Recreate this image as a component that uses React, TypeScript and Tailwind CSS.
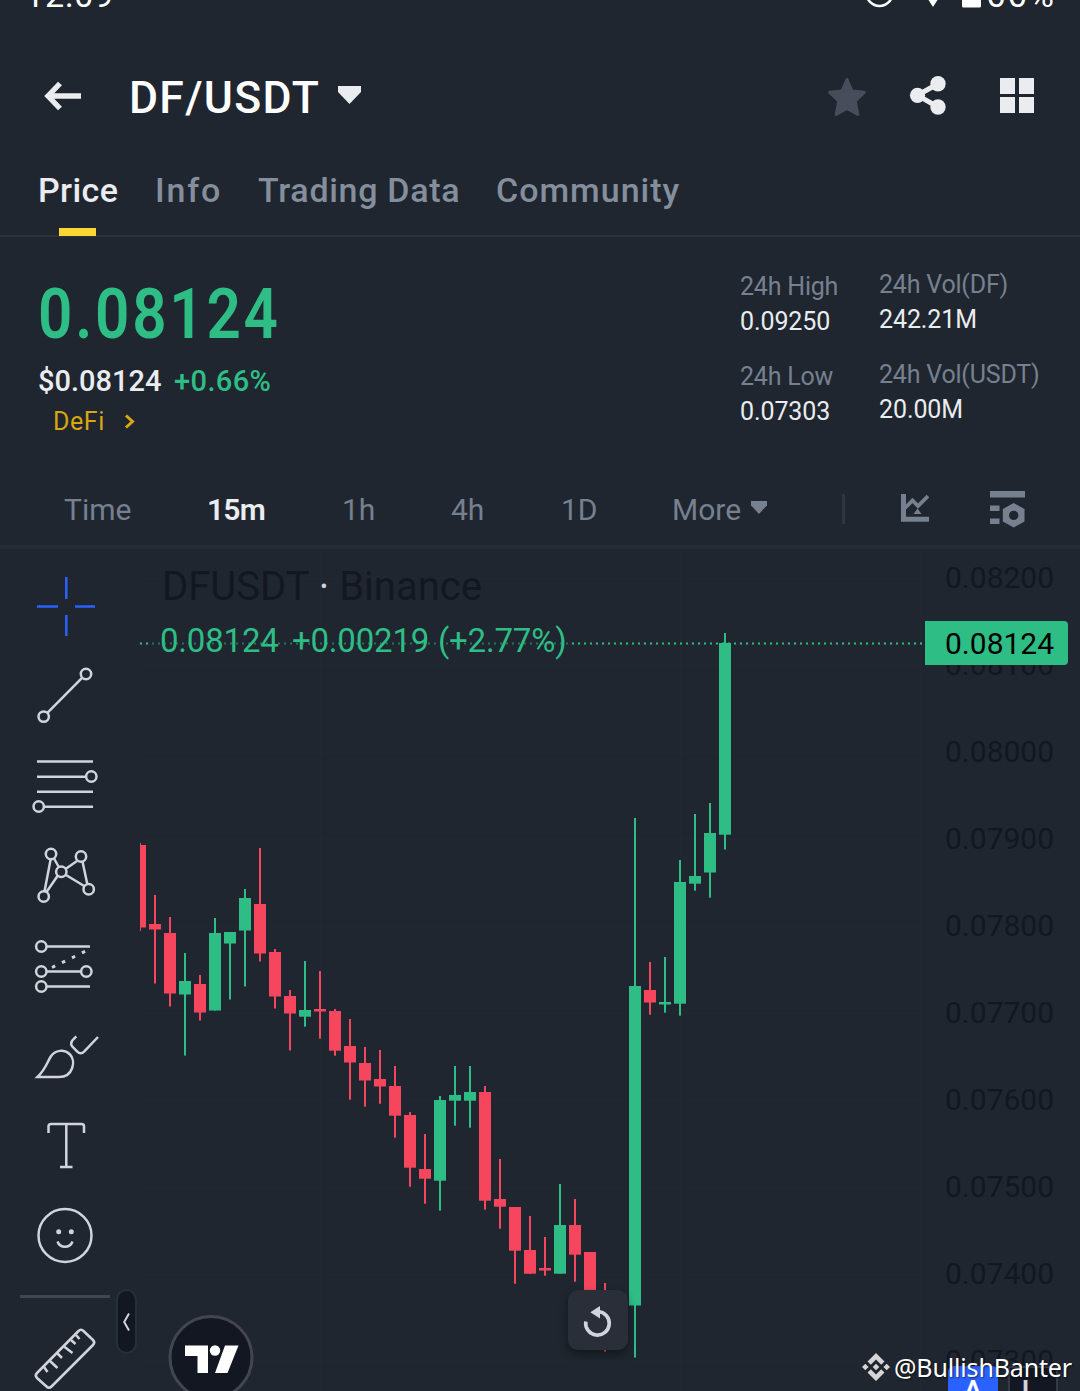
import React from 'react';

const UP = '#2ebd85';
const DOWN = '#f6465d';

// [x, body top, body bottom, wick top, wick bottom, rising]
type Candle = [number, number, number, number, number, boolean];

const CANDLES: Candle[] = [
    [140, 845, 927.5, 843, 931, false],
    [155, 924, 929.5, 895, 983.5, false],
    [170, 933, 993.5, 917, 1006.5, false],
    [185, 981, 994.5, 953, 1055.5, true],
    [200, 984, 1012.5, 975, 1020.5, false],
    [215, 933, 1010.5, 918, 1010.5, true],
    [230, 932, 943.5, 932, 999.5, true],
    [245, 898, 930.5, 889, 986.5, true],
    [260, 904, 953.5, 848, 961.5, false],
    [275, 952, 996.5, 949, 1008.5, false],
    [290, 996, 1013.5, 990, 1050.5, false],
    [305, 1010, 1016.7, 961, 1026.7, true],
    [320, 1009, 1011.5, 971, 1038.7, false],
    [335, 1011, 1050.7, 1009, 1055.7, false],
    [350, 1046, 1062.5, 1019, 1099.7, false],
    [365, 1063, 1080.5, 1047, 1106.7, false],
    [380, 1079, 1086.5, 1050, 1103.7, false],
    [395, 1086, 1115.7, 1066, 1137.7, false],
    [410, 1115, 1167.7, 1112, 1186.7, false],
    [425, 1169, 1178.7, 1134, 1203.7, false],
    [440, 1100, 1180.7, 1096, 1210.7, true],
    [455, 1095, 1100.7, 1066, 1125.7, true],
    [470, 1092, 1100.7, 1066, 1127.7, true],
    [485, 1092, 1200.7, 1086, 1209.7, false],
    [500, 1199, 1206.7, 1159, 1228.7, false],
    [515, 1207, 1250.7, 1207, 1283.7, false],
    [530, 1250, 1273.7, 1216, 1273.7, false],
    [545, 1268, 1270.5, 1237, 1275.7, false],
    [560, 1225, 1273.7, 1184, 1273.7, true],
    [575, 1225, 1254.7, 1199, 1281.7, false],
    [590, 1252, 1296, 1252, 1300, false],
    [605, 1296, 1330, 1283, 1351.7, false],
    [635, 986, 1305.5, 818, 1357.5, true],
    [650, 990, 1002.5, 962, 1014.7, false],
    [665, 1002, 1004.5, 957, 1012.7, true],
    [680, 882, 1003.7, 860, 1015.7, true],
    [695, 876, 883.7, 814, 890.7, true],
    [710, 833, 872.5, 803, 897.7, true],
    [725, 643, 834.7, 633, 849.5, true],
];

const AXIS_LABELS = ['0.08200', '0.08100', '0.08000', '0.07900', '0.07800', '0.07700', '0.07600', '0.07500', '0.07400', '0.07300'];

const Caret: React.FC<{ className: string }> = ({ className }) => (
    <svg viewBox="0 0 23 18" preserveAspectRatio="none" className={className} fill="currentColor">
        <path d="M0 0h23v6L11.500 18 0 6z" />
    </svg>
);

const StatusBar: React.FC = () => (
    <div className="flex h-5 justify-between overflow-hidden pl-[25px] pr-[24px] text-white">
        <span className="-mt-[25px] text-[34px] leading-[40px] tracking-[0.9px]">12:09</span>
        <div className="flex">
            <svg width="122" height="20" className="shrink-0">
                <circle cx="15.500" cy="-7" r="13" fill="none" stroke="#fff" strokeWidth="2.600" />
                <path d="M53-18h32L69 7z" fill="#fff" />
                <rect x="98" y="-24" width="19" height="31.500" rx="1.500" fill="#fff" />
            </svg>
            <span className="-mt-[25px] text-[34px] leading-[40px] tracking-[2.2px]">66%</span>
        </div>
    </div>
);

const Header: React.FC = () => (
    <header className="flex h-[154px] items-center pl-[44px] pr-[46px]">
        <svg width="38" height="30" viewBox="0 0 38 30" className="-mt-0.5 shrink-0" fill="none" stroke="#eaecef" strokeWidth="5.400">
            <path d="M4 15h33M16 2.500L4 15l12 12.500" />
        </svg>
        <h1 className="ml-[47px] mt-0.5 w-[194px] whitespace-nowrap text-[44.5px] font-medium leading-none tracking-[1.3px] text-white">DF/USDT</h1>
        <Caret className="ml-[15px] -mt-1 h-[18px] w-[23px] text-[#eaecef]" />
        <div className="ml-auto flex items-center">
            <svg width="38" height="40" viewBox="0 0 38 40" className="mr-[43px] -ml-px" fill="#474d5b" stroke="#474d5b" strokeWidth="3" strokeLinejoin="round">
                <path d="M19 2.500l5 11.500 12.300 1.300-9 8.700 2.500 13.500L19 31.500 8.200 37.500 10.700 24l-9-8.700L14 14z" />
            </svg>
            <svg width="38" height="40" viewBox="0 0 38 40" className="mr-[53px] -mt-1" fill="#eaecef">
                <path d="M29 8.700L8.500 20.300 29 32" fill="none" stroke="#eaecef" strokeWidth="5" />
                <circle cx="29" cy="8.700" r="7.700" />
                <circle cx="8.500" cy="20.300" r="7.600" />
                <circle cx="29" cy="32" r="7.700" />
            </svg>
            <div className="-mt-[3px] grid grid-cols-2 gap-x-1 gap-y-[3px]">
                <i className="h-4 w-[15px] bg-[#eaecef]" />
                <i className="h-4 w-[15px] bg-[#eaecef]" />
                <i className="h-4 w-[15px] bg-[#eaecef]" />
                <i className="h-4 w-[15px] bg-[#eaecef]" />
            </div>
        </div>
    </header>
);

const Tabs: React.FC = () => (
    <nav className="flex h-[63px] whitespace-nowrap border-b-2 border-[#2b3139] pl-[38px] text-[34px] font-medium leading-[32px] text-[#848e9c]">
        <div className="relative w-[117px] tracking-[0.4px] text-[#eaecef]">
            Price
            <span className="absolute left-[21px] -bottom-px h-2 w-[37px] bg-[#fcd535]" />
        </div>
        <span className="w-[103px] tracking-[1.8px]">Info</span>
        <span className="w-[238px] tracking-[0.7px]">Trading Data</span>
        <span className="tracking-[1px]">Community</span>
    </nav>
);

const Stat: React.FC<{ label: string; value: string }> = ({ label, value }) => (
    <div className="whitespace-nowrap text-[25px] leading-[35px]">
        <div className="tracking-[-0.2px] text-[#76808f]">{label}</div>
        <div className="tracking-[-0.1px] text-[#eaecef]">{value}</div>
    </div>
);

const Summary: React.FC = () => (
    <section className="flex h-[238px] pl-[38px]">
        <div className="w-[702px] pt-10">
            <div className="origin-left scale-x-[0.86] text-[70px] font-semibold leading-[75px] tracking-[3.2px] text-[#2ebd85]">0.08124</div>
            <div className="flex pt-px text-[29px] font-medium leading-[57px]">
                <span className="w-[136px]  text-[#eaecef]">$0.08124</span>
                <span className="tracking-[0.4px] text-[#2ebd85]">+0.66%</span>
            </div>
            <div className="flex items-center pl-[15px] pt-px text-[25px] leading-[21px] text-[#d9a70f]">
                <span className="w-[71px] tracking-[0.6px]">DeFi</span>
                <svg width="11" height="15" viewBox="0 0 11 15" fill="none" stroke="currentColor" strokeWidth="3">
                    <path d="M2 1.500l6.500 6L2 13.500" />
                </svg>
            </div>
        </div>
        <div className="flex w-[139px] flex-col gap-5 pt-8">
            <Stat label="24h High" value="0.09250" />
            <Stat label="24h Low" value="0.07303" />
        </div>
        <div className="flex flex-col gap-5 pt-[30px]">
            <Stat label="24h Vol(DF)" value="242.21M" />
            <Stat label="24h Vol(USDT)" value="20.00M" />
        </div>
    </section>
);

const Timeframes: React.FC = () => (
    <div className="flex h-[74px] items-center whitespace-nowrap border-b-4 border-[#262c35] pl-[64px] text-[30px] leading-none text-[#76808f]">
        <span className="w-[143px]">Time</span>
        <span className="w-[135px] font-semibold tracking-[-0.8px] text-[#eaecef]">15m</span>
        <span className="w-[109px]">1h</span>
        <span className="w-[110px]">4h</span>
        <span className="w-[111px]">1D</span>
        <span className="w-[79px]">More</span>
        <Caret className="-mt-[5px] h-[13px] w-4" />
        <span className="-mt-0.5 ml-[75px] h-[30px] w-[3px] bg-[#2f3640]" />
        <svg width="28" height="28" viewBox="0 0 28 28" className="-mt-1 ml-[56px]" fill="none" stroke="currentColor">
            <path d="M2.500 0v25.300H28" strokeWidth="5" />
            <path d="M4 14l7.500-7.500L17 12 27 2" strokeWidth="3.800" />
            <path d="M12.500 20l4-5.500 4 5.500z" fill="currentColor" stroke="none" />
        </svg>
        <svg width="35" height="37" viewBox="0 0 35 37" className="-mt-0.5 ml-[61px]" fill="currentColor">
            <path d="M0 0h35v6.500H0zM0 14.500h9.500v5.500H0zM0 27.500h9.500v5.500H0z" />
            <path fillRule="evenodd" d="M23.700 12l10.800 6v12.500l-10.800 6-10.900-6V18zM23.700 19.700a4.700 4.700 0 100 9.400 4.700 4.700 0 000-9.400z" />
        </svg>
    </div>
);

const ToolIcon: React.FC<{ children: React.ReactNode }> = ({ children }) => (
    <svg width="140" height="90" viewBox="0 0 140 90" className="shrink-0" fill="none" stroke="#d1d4dc" strokeWidth="2.500">
        {children}
    </svg>
);

const DrawingTools: React.FC = () => (
    <aside className="relative flex w-[140px] shrink-0 flex-col pt-3">
        {/* Crosshair */}
        <ToolIcon>
            <path d="M66.300 16v22M66.300 54v21M37 45.500h21M75 45.500h20" stroke="#2962ff" strokeWidth="2.500" />
        </ToolIcon>
        {/* Trend line */}
        <ToolIcon>
            <circle cx="86" cy="23" r="5.200" />
            <circle cx="43.700" cy="65.600" r="5.200" />
            <path d="M82.300 26.700L47.400 61.900" />
        </ToolIcon>
        {/* Fib retracement */}
        <ToolIcon>
            <path d="M37 20.500h56M37 35.700h49M37 50.700h56M44 65.700h49" />
            <circle cx="91.300" cy="35.500" r="5.200" />
            <circle cx="38.700" cy="65.500" r="5.200" />
        </ToolIcon>
        {/* XABCD pattern */}
        <ToolIcon>
            <path d="M50.600 28.500L44.500 60.500M54 27.500l4.500 8M57.500 45L46.500 61M65.500 38l11.500-8M66 44l19 11.500M82.500 30.500l5 23.500" />
            <circle cx="51" cy="23" r="5.200" />
            <circle cx="81" cy="25.500" r="5.200" />
            <circle cx="61.300" cy="40.700" r="5.200" />
            <circle cx="43.700" cy="65.500" r="5.200" />
            <circle cx="88.700" cy="58.300" r="5.200" />
        </ToolIcon>
        {/* Forecasting */}
        <ToolIcon>
            <path d="M47 25.500h43M47 50.500h33M47 65.500h43" />
            <path d="M52 46.500L88 29" strokeWidth="3" strokeDasharray="3.500 7.600" />
            <circle cx="41.300" cy="25.500" r="5.200" />
            <circle cx="41.300" cy="50.500" r="5.200" />
            <circle cx="86.300" cy="50.500" r="5.200" />
            <circle cx="41.300" cy="65.500" r="5.200" />
        </ToolIcon>
        {/* Brush */}
        <ToolIcon>
            <path d="M37.500 66C45 59 47.500 51 50.500 46c4.500-7.500 14-8 19.500-2.500 6 6 3.500 22.500-11 22.500z" />
            <path d="M76.300 25.300l-4 4.200c-1.500 2-1.500 4 0 6l5 5.200c2 2 4.800 2 6.800 0L98 26" />
        </ToolIcon>
        {/* Text */}
        <ToolIcon>
            <path d="M48.500 32v-6.500q0-2.500 2.500-2.500h30.500q2.500 0 2.500 2.500V32M66.300 23v43M60 66h12.500" />
        </ToolIcon>
        {/* Emoji */}
        <ToolIcon>
            <circle cx="65" cy="44.500" r="26.500" />
            <path d="M57.500 50.500c2.500 7 12.500 7 15 0" />
            <circle cx="58.700" cy="40.700" r="2.500" fill="#d1d4dc" stroke="none" />
            <circle cx="71.300" cy="40.700" r="2.500" fill="#d1d4dc" stroke="none" />
        </ToolIcon>
        <hr className="ml-5 mt-[14px] h-[3px] w-[90px] shrink-0 border-0 bg-[#434651]" />
        {/* Measure */}
        <svg width="140" height="93" viewBox="0 1298 140 93" className="shrink-0" fill="none" stroke="#d1d4dc" strokeWidth="2.500">
            <path d="M37 1373l41.500-42q2.500-2.500 5 0l9.500 9q2.500 2.500 0 5L51.500 1386.500q-2.500 2.500-5 0L37 1378q-2.500-2.500 0-5z" />
            <path d="M44 1367l3.500 5M50 1361l7.500 7M57.500 1353.500l4.500 4.500M64 1346.500l8.500 6.500M71 1340l4.500 4M76 1335l3.500 4" />
        </svg>
        <button className="absolute left-[116px] top-[740px] flex h-[65px] w-[21px] items-center justify-center rounded-full border-2 border-[#2a2e39] bg-[#131722]">
            <svg width="7" height="18" viewBox="0 0 7 18" fill="none" stroke="#d1d4dc" strokeWidth="2">
                <path d="M6 0.500L1.200 9 6 17.500" />
            </svg>
        </button>
    </aside>
);

const PricePane: React.FC = () => (
    <div className="relative w-[785px] shrink-0">
        <svg width="785" height="842" viewBox="140 549 785 842" className="block">
            <g stroke="#222832" strokeWidth="1">
                {AXIS_LABELS.map((label, i) => (
                    <line key={label} x1="140" x2="925" y1={578.5 + i * 87} y2={578.5 + i * 87} />
                ))}
                <path d="M320.500 549v842M680.500 549v842M920.500 549v842" />
            </g>
            <path d="M140 643.500h9" stroke={UP} strokeWidth="2" strokeDasharray="2 4" />
            <path d="M152 643.500h420" stroke={UP} strokeOpacity="0.5" strokeWidth="2" strokeDasharray="2 4" />
            <path d="M572 643.500h351" stroke={UP} strokeWidth="2" strokeDasharray="2 4" />
            {CANDLES.map(([x, top, bottom, high, low, rising]) => (
                <g key={x} fill={rising ? UP : DOWN}>
                    <rect x={x - 1} y={high} width="2" height={low - high} />
                    <rect x={x - 6} y={top} width="12" height={bottom - top} />
                </g>
            ))}
        </svg>
        <div className="absolute left-[22px] top-[18px] whitespace-pre text-[40px] leading-[40px] text-[#131722]">
            DFUSDT <span className="text-[#d1d4dc]">·</span> Binance
        </div>
        <div className="absolute left-[20px] top-[72px] flex whitespace-nowrap text-[33px] leading-[40px] tracking-[-0.2px] text-[#2ebd85]">
            <span className="w-[132px]">0.08124</span>
            <span className="w-[146px]">+0.00219</span>
            <span>(+2.77%)</span>
        </div>
        {/* TradingView badge */}
        <svg width="86" height="86" viewBox="168 1314 86 86" className="absolute left-[28px] top-[765px]">
            <circle cx="211" cy="1357.500" r="41" fill="#131722" stroke="#434651" strokeWidth="3" />
            <path d="M185 1345.500h23V1373h-10.500v-17H185zM225 1345.500h13.500L227.500 1373H215z" fill="#fff" />
            <circle cx="215" cy="1350.500" r="5.200" fill="#fff" />
        </svg>
        <button className="absolute left-[428px] top-[741px] h-[60px] w-[60px] rounded-[10px] bg-[#2a2e39] shadow-[0_4px_8px_rgba(0,0,0,0.4)]">
            <svg width="60" height="60" viewBox="0 0 60 60" fill="none">
                <path d="M17.800 31.500A11.800 11.800 0 1 0 30 21.500" stroke="#d1d4dc" strokeWidth="3.600" />
                <path d="M22.300 22.300L32 16v12.500z" fill="#d1d4dc" />
            </svg>
        </button>
    </div>
);

const PriceAxis: React.FC = () => (
    <div className="relative flex-1">
        <div className="-mt-[15.5px] flex flex-col pl-[20px] text-[30px] leading-[87px] text-[#131722]">
            {AXIS_LABELS.map((label) => (
                <span key={label}>{label}</span>
            ))}
        </div>
        <div className="absolute left-0 top-[72px] h-11 w-[143px] rounded-r-[4px] bg-[#2ebd85] pl-[20px] text-[30px] leading-[46px] text-black">0.08124</div>
        <div className="absolute left-[23px] top-[817px] flex gap-[10px] text-[30px] font-medium leading-none">
            <span className="h-[50px] w-[50px] rounded-[6px] bg-[#2962ff] pt-[10px] text-center text-white">A</span>
            <span className="h-[50px] w-[50px] rounded-[3px] border-2 border-[#363a45] bg-[#131722] pt-[8px] pr-[7px] text-center text-[#d1d4dc]">L</span>
        </div>
    </div>
);

const Watermark: React.FC = () => (
    <div className="absolute bottom-[9px] right-[8px] flex items-center gap-[4px] font-['Noto_Sans'] text-[25px] leading-[30px] tracking-[-0.15px] text-white [text-shadow:1px_1px_2px_rgba(0,0,0,0.6)]">
        <svg width="28" height="28" viewBox="0 0 28 28" fill="#d6d6d6">
            <path d="M14 0l8.500 8.500-3.300 3.300L14 6.600l-5.200 5.200-3.300-3.300zM14 28l-8.500-8.500 3.300-3.300 5.200 5.200 5.200-5.200 3.300 3.300zM14 10.700l3.300 3.300-3.300 3.300-3.300-3.300zM3.300 10.700L6.600 14l-3.300 3.300L0 14zM24.700 10.700L28 14l-3.300 3.300-3.300-3.300z" />
        </svg>
        <span>@BullishBanter</span>
    </div>
);

const App: React.FC = () => {
    return (
        <div className="relative h-[1391px] w-[1080px] overflow-hidden bg-[#1f262f] font-[Roboto,'Liberation_Sans',sans-serif]">
            <StatusBar />
            <Header />
            <Tabs />
            <Summary />
            <Timeframes />
            <main className="flex h-[842px] overflow-hidden">
                <DrawingTools />
                <PricePane />
                <PriceAxis />
            </main>
            <Watermark />
        </div>
    );
};

export default App;
